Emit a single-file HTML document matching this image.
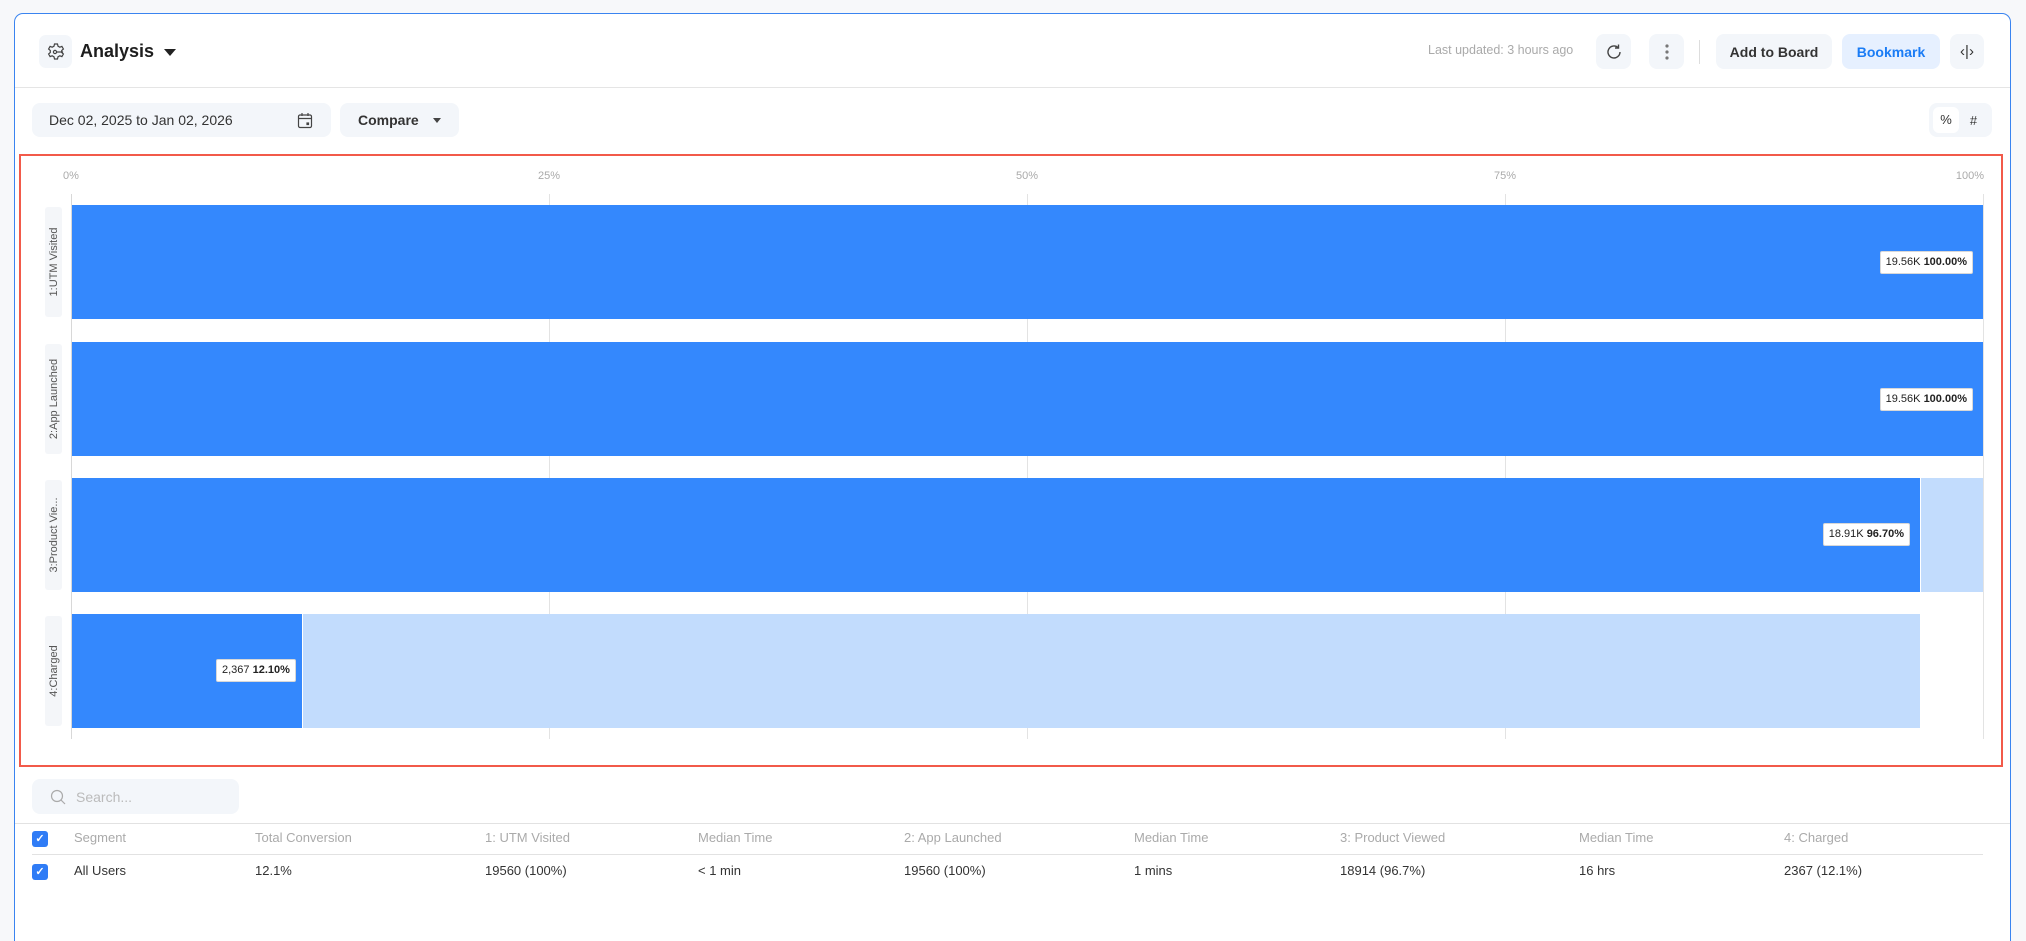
<!DOCTYPE html>
<html style="height:941px;overflow:hidden"><head><meta charset="utf-8"><style>
*{box-sizing:border-box;margin:0;padding:0}
body{width:2026px;height:941px;background:#f7f8fa;font-family:"Liberation Sans",sans-serif;position:relative;overflow:hidden;color:#222}
.a{position:absolute}
.card{left:14px;top:13px;width:1997px;height:928px;background:#fff;border:1.5px solid #3a84f0;border-bottom:none;border-radius:9px 9px 0 0}
.btn{position:absolute;background:#f3f6fa;border-radius:8px;display:flex;align-items:center;justify-content:center;font-size:14px;font-weight:bold;color:#333}
.ax{position:absolute;top:170px;font-size:11px;color:#aaa;transform:translateX(-50%)}
.grid{position:absolute;top:194px;height:545px;width:1px;background:#e3e3e3}
.bar{position:absolute;left:72px;height:114px;background:#3488fd}
.lt{position:absolute;height:114px;background:#c2dcfd}
.lbl{position:absolute;background:#fff;border:1px solid #d8d8d8;border-radius:2px;font-size:11px;height:23px;line-height:21px;padding:0 5px;color:#222;white-space:nowrap}
.yl{position:absolute;left:45px;width:17px;height:110px;background:#f4f6f9;border-radius:3px}
.yl span{position:absolute;left:50%;top:50%;transform:translate(-50%,-50%) rotate(-90deg);white-space:nowrap;font-size:11px;color:#555}
.th{position:absolute;top:830px;font-size:13px;color:#aaa}
.td{position:absolute;top:863px;font-size:13px;color:#333}
.cb{position:absolute;left:32px;width:16px;height:16px;background:#2f7cf6;border-radius:3px;color:#fff;font-size:11px;text-align:center;line-height:16px;font-weight:bold}
</style></head><body>
<div class="a card"></div>
<div class="btn" style="left:39px;top:35px;width:33px;height:33px;border-radius:7px"><svg width="20" height="20" viewBox="0 0 20 20" fill="none" stroke="#444" stroke-width="1.2"><path d="M8.5 2h3l.5 2.2 1.8 1 2.1-.8 1.5 2.6-1.7 1.5v2l1.7 1.5-1.5 2.6-2.1-.8-1.8 1-.5 2.2h-3l-.5-2.2-1.8-1-2.1.8-1.5-2.6 1.7-1.5v-2L2.6 7l1.5-2.6 2.1.8 1.8-1z"/><circle cx="9" cy="10" r="1.6"/><path d="M10.6 10h6.5"/></svg></div>
<div class="a" style="left:80px;top:41px;font-size:18px;font-weight:bold;color:#1e1e1e">Analysis</div>
<div class="a" style="left:164px;top:49px;border-left:6px solid transparent;border-right:6px solid transparent;border-top:7px solid #222"></div>
<div class="a" style="left:1428px;top:43px;font-size:12.5px;color:#aaa">Last updated: 3 hours ago</div>
<div class="btn" style="left:1596px;top:34px;width:35px;height:35px"><svg width="18" height="18" viewBox="0 0 18 18" fill="none" stroke="#444" stroke-width="1.4"><path d="M15 9a6 6 0 1 1-2-4.5"/><path d="M13.5 1.5v3.5H10"/></svg></div>
<div class="btn" style="left:1649px;top:34px;width:35px;height:35px"><svg width="4" height="16"><circle cx="2" cy="2" r="1.6" fill="#777"/><circle cx="2" cy="8" r="1.6" fill="#777"/><circle cx="2" cy="14" r="1.6" fill="#777"/></svg></div>
<div class="a" style="left:1699px;top:40px;width:1px;height:24px;background:#ddd"></div>
<div class="btn" style="left:1716px;top:34px;width:116px;height:35px">Add to Board</div>
<div class="btn" style="left:1842px;top:34px;width:98px;height:35px;background:#e6f0ff;color:#1a7cf5">Bookmark</div>
<div class="btn" style="left:1950px;top:34px;width:34px;height:35px;font-weight:normal;font-size:15px">&lsaquo;|&rsaquo;</div>
<div class="a" style="left:15px;top:87px;width:1995px;height:1px;background:#e5e5e5"></div>
<div class="btn" style="left:32px;top:103px;width:299px;height:34px;justify-content:flex-start;padding-left:17px;font-weight:normal;font-size:14px;color:#333">Dec 02, 2025 to Jan 02, 2026
<svg class="a" style="left:265px;top:9px" width="16" height="17" viewBox="0 0 16 17" fill="none" stroke="#444" stroke-width="1.2"><rect x="1.5" y="3" width="13" height="12.5" rx="1.5"/><path d="M1.5 6.5h13M5 1v3M11 1v3"/><rect x="10" y="11" width="1.5" height="1.5" fill="#444"/></svg></div>
<div class="btn" style="left:340px;top:103px;width:119px;height:34px;justify-content:flex-start;padding-left:18px">Compare<span style="margin-left:14px;border-left:4px solid transparent;border-right:4px solid transparent;border-top:5px solid #444"></span></div>
<div class="btn" style="left:1929px;top:103px;width:63px;height:34px;justify-content:flex-start;padding:4px"><div style="width:26px;height:26px;background:#fff;border-radius:6px;text-align:center;line-height:26px;font-weight:normal;font-size:13px">%</div><div style="width:29px;text-align:center;font-weight:normal;font-size:13px">#</div></div>
<div class="a" style="left:19px;top:154px;width:1984px;height:613px;border:2px solid #f25a4a"></div>
<div class="ax" style="left:71px">0%</div><div class="ax" style="left:549px">25%</div><div class="ax" style="left:1027px">50%</div><div class="ax" style="left:1505px">75%</div><div class="ax" style="left:1970px">100%</div>
<div class="grid" style="left:71px;background:#d8d8d8"></div><div class="grid" style="left:549px"></div><div class="grid" style="left:1027px"></div><div class="grid" style="left:1505px"></div><div class="grid" style="left:1983px"></div>
<div class="bar" style="top:205px;width:1911px"></div>
<div class="bar" style="top:342px;width:1911px"></div>
<div class="bar" style="top:478px;width:1848px"></div><div class="lt" style="top:478px;left:1921px;width:62px"></div>
<div class="bar" style="top:614px;width:230px"></div><div class="lt" style="top:614px;left:303px;width:1617px"></div>
<div class="lbl" style="right:53px;top:251px">19.56K <b>100.00%</b></div>
<div class="lbl" style="right:53px;top:388px">19.56K <b>100.00%</b></div>
<div class="lbl" style="right:116px;top:523px">18.91K <b>96.70%</b></div>
<div class="lbl" style="left:216px;top:659px">2,367 <b>12.10%</b></div>
<div class="yl" style="top:207px"><span>1:UTM Visited</span></div>
<div class="yl" style="top:344px"><span>2:App Launched</span></div>
<div class="yl" style="top:480px"><span>3:Product Vie...</span></div>
<div class="yl" style="top:616px"><span>4:Charged</span></div>
<div class="btn" style="left:32px;top:779px;width:207px;height:35px;justify-content:flex-start;padding-left:18px;font-weight:normal;color:#bbb;font-size:14px"><svg width="16" height="16" viewBox="0 0 16 16" fill="none" stroke="#aaa" stroke-width="1.2" style="margin-right:10px"><circle cx="7" cy="7" r="5.5"/><path d="M11 11l4 4"/></svg>Search...</div>
<div class="a" style="left:15px;top:823px;width:1995px;height:1px;background:#e2e2e2"></div>
<div class="a" style="left:32px;top:854px;width:1951px;height:1px;background:#e2e2e2"></div>
<div class="cb" style="top:831px">✓</div><div class="cb" style="top:864px">✓</div>
<div class="th" style="left:74px">Segment</div><div class="th" style="left:255px">Total Conversion</div><div class="th" style="left:485px">1: UTM Visited</div><div class="th" style="left:698px">Median Time</div><div class="th" style="left:904px">2: App Launched</div><div class="th" style="left:1134px">Median Time</div><div class="th" style="left:1340px">3: Product Viewed</div><div class="th" style="left:1579px">Median Time</div><div class="th" style="left:1784px">4: Charged</div>
<div class="td" style="left:74px">All Users</div><div class="td" style="left:255px">12.1%</div><div class="td" style="left:485px">19560 (100%)</div><div class="td" style="left:698px">&lt; 1 min</div><div class="td" style="left:904px">19560 (100%)</div><div class="td" style="left:1134px">1 mins</div><div class="td" style="left:1340px">18914 (96.7%)</div><div class="td" style="left:1579px">16 hrs</div><div class="td" style="left:1784px">2367 (12.1%)</div>
</body></html>
